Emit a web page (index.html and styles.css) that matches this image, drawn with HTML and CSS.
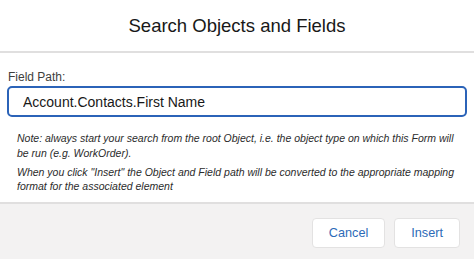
FILE: index.html
```html
<!DOCTYPE html>
<html lang="en">
<head>
    <meta charset="UTF-8">
    <meta name="viewport" content="width=device-width, initial-scale=1.0">
    <title>Search Objects and Fields</title>
    <link rel="stylesheet" href="styles.css">
</head>
<body>

    <div class="modal">
        <header class="modal-header">
            <h2>Search Objects and Fields</h2>
        </header>

        <div class="modal-body">
            <label class="field-label" for="path">Field Path:</label>
            <input class="field-input" id="path" type="text" value="Account.Contacts.First Name">

            <div class="help">
                <p>Note: always start your search from the root Object, i.e. the object type on which this Form will be run (e.g. WorkOrder).</p>
                <p>When you click "Insert" the Object and Field path will be converted to the appropriate mapping format for the associated element</p>
            </div>
        </div>

        <footer class="modal-footer">
            <button class="btn">Cancel</button>
            <button class="btn">Insert</button>
        </footer>
    </div>

</body>
</html>
```

FILE: styles.css
```css
* {
    margin: 0;
    padding: 0;
    box-sizing: border-box;
}

body {
    font-family: "Liberation Sans", Arial, sans-serif;
    background-color: #fff;
    color: #181818;
    width: 474px;
    height: 259px;
    overflow: hidden;
}

.modal {
    display: flex;
    flex-direction: column;
    height: 259px;
}

.modal-header {
    height: 53px;
    border-bottom: 2px solid #e0dfdf;
    display: flex;
    justify-content: center;
    align-items: center;
}

.modal-header h2 {
    font-size: 18.5px;
    font-weight: 400;
    padding-top: 1px;
}

.modal-body {
    padding: 17px 7px 0 7px;
    height: 149px;
}

.field-label {
    display: block;
    font-size: 12px;
    color: #3e3e3c;
    padding-left: 1px;
    margin-bottom: 2px;
}

.field-input {
    display: block;
    width: 460px;
    height: 31px;
    border: 2px solid #2b63b8;
    border-radius: 5px;
    padding: 0 14px;
    font-family: inherit;
    font-size: 14px;
    color: #181818;
    outline: none;
}

.help {
    padding: 14px 10px 0 10px;
    font-size: 10.5px;
    font-style: italic;
    line-height: 14.5px;
    color: #2b2b2b;
}

.help p {
    margin-bottom: 4.5px;
}

.modal-footer {
    flex: 1;
    background-color: #f3f2f2;
    border-top: 2px solid #e0dfdf;
    display: flex;
    justify-content: flex-end;
    align-items: flex-start;
    gap: 9px;
    padding: 14px 14px 0 0;
}

.btn {
    background-color: #fff;
    color: #2d6bb8;
    border: 1px solid #e3e2e2;
    border-radius: 4px;
    height: 30px;
    padding: 0 16px;
    font-family: inherit;
    font-size: 12.7px;
    cursor: pointer;
}
```
